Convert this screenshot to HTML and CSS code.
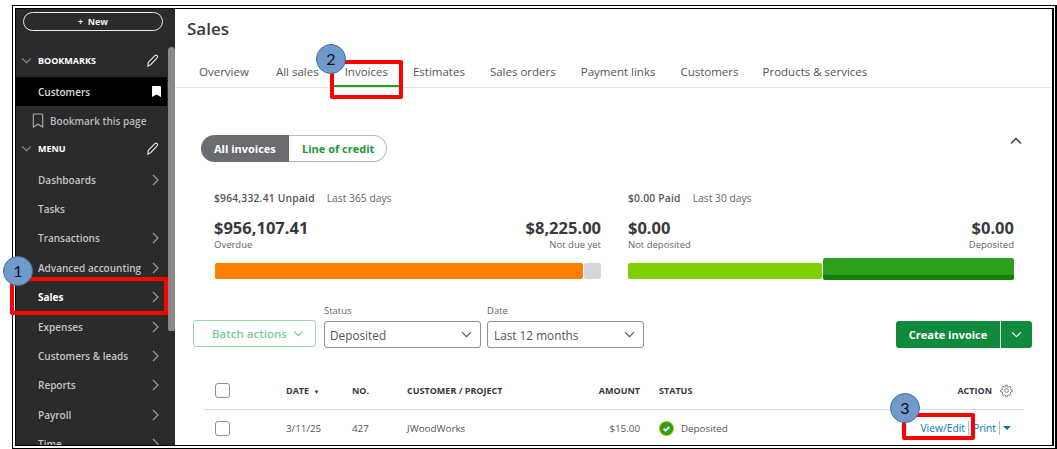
FILE: index.html
```html
<!DOCTYPE html>
<html lang="en">
<head>
<meta charset="utf-8">
<title>Sales</title>
<link rel="stylesheet" href="styles.css">
</head>
<body>
<div class="frame">
  <aside class="sidebar">
    <div class="new-wrap"><button class="new-btn">+&nbsp;&nbsp;New</button></div>
    <div class="side-head"><svg class="caret" viewBox="0 0 12 8"><path d="M1 1.500l5 5 5-5"/></svg><span>BOOKMARKS</span><svg class="pencil" viewBox="0 0 14 14"><path d="M2.500 9L9.500 1.700c.7-.7 1.700-.7 2.400 0s.7 1.700 0 2.400L5 11.500 2 13z"/></svg></div>
    <div class="side-active"><span>Customers</span><svg class="mark" viewBox="0 0 9 11"><path d="M0 1a1 1 0 0 1 1-1h7a1 1 0 0 1 1 1v10L4.500 8.500 0 11z"/></svg></div>
    <div class="side-bookmark"><svg class="mark-o" viewBox="0 0 12 16"><path d="M1 2a1 1 0 0 1 1-1h8a1 1 0 0 1 1 1v13L6 12l-5 3z"/></svg><span>Bookmark this page</span></div>
    <div class="side-head menu"><svg class="caret" viewBox="0 0 12 8"><path d="M1 1.500l5 5 5-5"/></svg><span>MENU</span><svg class="pencil" viewBox="0 0 14 14"><path d="M2.500 9L9.500 1.700c.7-.7 1.700-.7 2.400 0s.7 1.700 0 2.400L5 11.500 2 13z"/></svg></div>
    <nav class="side-nav">
      <div class="nav-item"><span>Dashboards</span><svg class="chev" viewBox="0 0 7 12"><path d="M1 1l5 5-5 5"/></svg></div>
      <div class="nav-item"><span>Tasks</span></div>
      <div class="nav-item"><span>Transactions</span><svg class="chev" viewBox="0 0 7 12"><path d="M1 1l5 5-5 5"/></svg></div>
      <div class="nav-item"><span>Advanced accounting</span><svg class="chev" viewBox="0 0 7 12"><path d="M1 1l5 5-5 5"/></svg></div>
      <div class="nav-item current"><span>Sales</span><svg class="chev" viewBox="0 0 7 12"><path d="M1 1l5 5-5 5"/></svg></div>
      <div class="nav-item"><span>Expenses</span><svg class="chev" viewBox="0 0 7 12"><path d="M1 1l5 5-5 5"/></svg></div>
      <div class="nav-item"><span>Customers &amp; leads</span><svg class="chev" viewBox="0 0 7 12"><path d="M1 1l5 5-5 5"/></svg></div>
      <div class="nav-item"><span>Reports</span><svg class="chev" viewBox="0 0 7 12"><path d="M1 1l5 5-5 5"/></svg></div>
      <div class="nav-item"><span>Payroll</span><svg class="chev" viewBox="0 0 7 12"><path d="M1 1l5 5-5 5"/></svg></div>
      <div class="nav-item"><span>Time</span><svg class="chev" viewBox="0 0 7 12"><path d="M1 1l5 5-5 5"/></svg></div>
    </nav>
    <div class="scrollbar"></div>
  </aside>
  <main class="main">
    <h1 class="title">Sales</h1>
    <div class="tabs">
      <span class="tab">Overview</span><span class="tab">All sales</span><span class="tab active">Invoices</span><span class="tab">Estimates</span><span class="tab">Sales orders</span><span class="tab">Payment links</span><span class="tab">Customers</span><span class="tab">Products &amp; services</span>
    </div>
    <div class="seg-row">
      <div class="seg"><span class="seg-on">All invoices</span><span class="seg-off">Line of credit</span></div>
      <svg class="collapse" viewBox="0 0 12 8"><path d="M1 6.500l5-5 5 5"/></svg>
    </div>
    <div class="summary">
      <section class="panel">
        <div class="panel-top"><b>$964,332.41 Unpaid</b><span>Last 365 days</span></div>
        <div class="figures"><div><div class="fig">$956,107.41</div><div class="cap">Overdue</div></div><div class="right"><div class="fig">$8,225.00</div><div class="cap">Not due yet</div></div></div>
        <div class="bar"><i class="b-orange"></i><i class="b-grey"></i></div>
      </section>
      <section class="panel">
        <div class="panel-top"><b>$0.00 Paid</b><span>Last 30 days</span></div>
        <div class="figures"><div><div class="fig">$0.00</div><div class="cap">Not deposited</div></div><div class="right"><div class="fig">$0.00</div><div class="cap">Deposited</div></div></div>
        <div class="bar"><i class="b-lime"></i><i class="b-green"></i></div>
      </section>
    </div>
    <div class="filters">
      <button class="batch">Batch actions<svg class="dd" viewBox="0 0 12 8"><path d="M1 1.500l5 5 5-5"/></svg></button>
      <div class="field status"><label>Status</label><div class="select"><span>Deposited</span><svg class="dd" viewBox="0 0 12 8"><path d="M1 1.500l5 5 5-5"/></svg></div></div>
      <div class="field date"><label>Date</label><div class="select"><span>Last 12 months</span><svg class="dd" viewBox="0 0 12 8"><path d="M1 1.500l5 5 5-5"/></svg></div></div>
      <div class="create"><span class="create-main">Create invoice</span><span class="create-dd"><svg class="dd" viewBox="0 0 12 8"><path d="M1 1.500l5 5 5-5"/></svg></span></div>
    </div>
    <div class="table">
      <div class="tr thead">
        <span class="c-check"><i class="box"></i></span><span class="c-date">DATE <small>▼</small></span><span class="c-no">NO.</span><span class="c-cust">CUSTOMER / PROJECT</span><span class="c-amt">AMOUNT</span><span class="c-status">STATUS</span>
        <span class="c-action">ACTION<svg class="gear" viewBox="0 0 24 24"><path d="M10.500 2h3l.5 2.800 2.200.9 2.300-1.600 2.100 2.100-1.600 2.300.9 2.200 2.800.5v3l-2.800.5-.9 2.200 1.600 2.300-2.100 2.100-2.300-1.600-2.200.9-.5 2.800h-3l-.5-2.800-2.200-.9-2.300 1.600-2.100-2.100 1.600-2.300-.9-2.200-2.800-.5v-3l2.800-.5.9-2.200-1.600-2.300 2.100-2.100 2.300 1.600 2.200-.9z"/><circle cx="12" cy="12" r="3.500"/></svg></span>
      </div>
      <div class="tr tbody">
        <span class="c-check"><i class="box"></i></span><span class="c-date">3/11/25</span><span class="c-no">427</span><span class="c-cust">JWoodWorks</span><span class="c-amt">$15.00</span>
        <span class="c-status"><svg class="ok" viewBox="0 0 16 16"><circle cx="8" cy="8" r="7.500"/><path d="M4.800 8.200l2.200 2.200 4-4"/></svg>Deposited</span>
        <span class="c-action links"><a class="view">View/Edit</a><a class="print">Print</a><i class="tri"></i></span>
      </div>
    </div>
  </main>
</div>
<div class="callout sales-box"></div>
<div class="callout inv-box"></div>
<div class="callout view-box"></div>
<div class="num n1">1</div>
<div class="num n2">2</div>
<div class="num n3">3</div>
</body>
</html>
```
FILE: styles.css
```css
* { box-sizing: border-box; }
html, body { margin: 0; padding: 0; background: #fff; }
body { position: relative; width: 1057px; height: 449px; overflow: hidden; font-family: "Open Sans", "Liberation Sans", sans-serif; }
svg { fill: none; stroke: currentColor; display: block; }
.frame { position: absolute; left: 12px; top: 5px; width: 1045px; height: 444px; border-style: double; border-color: #000; border-width: 4px 5px 4px 4px; display: flex; overflow: hidden; background: #fff; }

.sidebar { position: relative; width: 159px; flex: none; background: #2b2b2b; color: #c9c9c9; font-size: 10px; overflow: hidden; font-weight: 600; }
.new-wrap { padding: 3px 0 0 7px; height: 42px; }
.new-btn { display: block; width: 140px; height: 19px; border: 1px solid #e8e8e8; border-radius: 10px; background: transparent; color: #eee; font: 700 9px "Open Sans", sans-serif; }
.side-head { display: flex; align-items: center; height: 18px; padding: 0 16px 0 5px; color: #fff; font-size: 9px; font-weight: 700; }
.side-head span { margin-left: 6px; flex: 1; }
.caret { width: 11px; height: 7px; color: #8d8d8d; stroke-width: 1.200; }
.pencil { width: 13px; height: 13px; color: #e4e4e4; stroke-width: 1.200; }
.side-active { display: flex; align-items: center; justify-content: space-between; height: 29px; margin: 8px 8px 0 0; padding: 0 6px 0 22px; background: #000; color: #ddd; }
.mark { width: 9px; height: 11px; fill: #fff; stroke: none; }
.side-bookmark { display: flex; align-items: center; height: 29px; padding-left: 16px; color: #bbb; }
.mark-o { width: 12px; height: 15px; margin-right: 6px; color: #aaa; stroke-width: 1.200; }
.menu { margin-top: 4px; }
.side-nav { margin-top: 8px; }
.nav-item { display: flex; align-items: center; justify-content: space-between; height: 29.400px; padding: 0 16px 0 22px; color: #c4c4c4; }
.nav-item.current { color: #fff; font-weight: 700; }
.chev { width: 7px; height: 12px; color: #9a9a9a; stroke-width: 1.200; }
.scrollbar { position: absolute; right: 0; top: 38px; width: 7px; height: 284px; background: #8a8a8a; border-radius: 4px 4px 3px 3px; }

.main { flex: 1; min-width: 0; color: #393a3d; }
.title { margin: 0; padding: 8px 0 0 12px; height: 41px; font: 600 17px/24px "Open Sans", sans-serif; color: #393a3d; }
.tabs { display: flex; height: 38px; padding-left: 24px; border-bottom: 1px solid #e3e3e3; font-size: 11.500px; color: #555; gap: 25px; }
.tab { padding-top: 14px; line-height: 16px; }
.tab:first-child { margin-right: 2px; }
.tab.active { position: relative; margin-left: 1px; }
.tab.active::after { content: ""; position: absolute; left: -11px; right: -12px; top: 35px; height: 2px; background: #2ca01c; }
.tab:last-child { margin-left: -1px; }
.seg-row { display: flex; justify-content: space-between; align-items: flex-start; height: 27px; margin-top: 47px; padding: 0 30px 0 26px; }
.seg { display: flex; height: 27px; font-size: 11px; font-weight: 700; white-space: nowrap; }
.seg-on { display: flex; align-items: center; padding: 0 13px; width: 88px; background: #6b6c72; color: #fff; border-radius: 14px 0 0 14px; }
.seg-off { display: flex; align-items: center; padding: 0 0 0 13px; width: 98px; color: #1e9638; border: 1px solid #bbb; border-left: 0; border-radius: 0 14px 14px 0; }
.collapse { width: 12px; height: 8px; margin-top: 2px; color: #393a3d; stroke-width: 1.400; }
.summary { display: flex; gap: 27px; padding: 0 0 0 39px; margin-top: 29px; }
.panel { width: 387px; }
.panel + .panel { width: 386px; }
.panel-top { display: flex; gap: 12px; font-size: 10.300px; line-height: 14px; color: #666; }
.panel-top b { font-weight: 600; color: #555; letter-spacing: .2px; }
.figures { display: flex; justify-content: space-between; margin-top: 13px; }
.fig { font-size: 16.500px; line-height: 20px; font-weight: 700; color: #393a3d; }
.cap { font-size: 9.500px; line-height: 13px; color: #666; }
.right { text-align: right; }
.bar { display: flex; align-items: flex-end; height: 22px; margin-top: 7px; }
.bar i { display: block; height: 16px; margin-bottom: 1px; border-radius: 2px; }
.b-orange { width: 368px; margin-left: 1px; background: #ff8000; }
.b-grey { flex: 1; margin-left: 1px; background: #d4d7dc; }
.b-lime { width: 194px; background: #7fd000; }
.bar .b-green { flex: 1; margin: 0 0 0 1px; height: 22px; background: #2ca01c; border-bottom: 5px solid #108000; }

.filters { display: flex; align-items: flex-end; height: 48px; margin-top: 20px; padding-left: 18px; }
.batch { display: flex; align-items: center; justify-content: space-between; width: 123px; height: 27px; margin-bottom: 1px; padding: 0 11px 0 18px; border: 1px solid #98d9ab; border-radius: 3px; background: #fff; color: #7dcb94; font: 600 11.500px "Open Sans", sans-serif; }
.dd { width: 11px; height: 7px; stroke-width: 1.300; }
.field { margin-left: 8px; }
.field label { display: block; font-size: 9.500px; line-height: 18px; margin-bottom: 1px; color: #666; }
.select { display: flex; align-items: center; justify-content: space-between; height: 27px; padding: 0 8px 0 5px; border: 1px solid #8d9096; border-radius: 3px; font-size: 11.800px; color: #555; }
.status { width: 157px; }
.date { width: 157px; margin-left: 6px; }
.date .select { padding-left: 6px; }
.create { display: flex; margin-left: auto; margin-right: 20px; height: 27px; color: #fff; font-size: 11px; font-weight: 700; }
.create-main { display: flex; align-items: center; justify-content: center; width: 104px; background: #108a3c; border-radius: 3px 0 0 3px; }
.create-dd { display: flex; align-items: center; justify-content: center; width: 31px; margin-left: 1px; background: #108a3c; border-radius: 0 3px 3px 0; }

.table { margin: 0 28px 0 29px; font-size: 9.800px; color: #555; }
.tr { display: flex; align-items: center; }
.thead { height: 42px; margin-top: 20px; padding-top: 3px; border-bottom: 1px solid #dcdcdc; font-size: 9px; font-weight: 700; color: #393a3d; }
.tbody { height: 36px; }
.c-check { width: 82px; padding-left: 11px; }
.box { display: block; width: 15px; height: 15px; border: 1px solid #8d9096; border-radius: 3px; background: #fff; }
.c-date { width: 66px; }
.c-date small { font-size: 6px; margin-left: 2px; }
.c-no { width: 55px; }
.c-cust { width: 125px; }
.c-amt { width: 108px; text-align: right; }
.c-status { display: flex; align-items: center; gap: 7px; width: 100px; margin-left: 19px; }
.c-action { flex: 1; display: flex; justify-content: flex-end; align-items: center; padding-right: 11px; }
.gear { width: 13px; height: 13px; margin-left: 8px; color: #6b6c72; stroke-width: 1.600; }
.ok { width: 15px; height: 15px; flex: none; }
.ok circle { fill: #2ca01c; stroke: #b5c400; stroke-width: 1; }
.ok path { stroke: #fff; stroke-width: 2; }
.links { color: #0077c5; font-size: 10.300px; padding-right: 13px; }
.view { padding-right: 3px; border-right: 1px solid #bbb; }
.print { margin-left: 4px; padding-right: 3px; border-right: 1px solid #bbb; }
.tri { width: 0; height: 0; margin-left: 3px; border: 4px solid transparent; border-top: 4px solid #0077c5; border-bottom: 0; }

.callout { position: absolute; border: 4px solid #f00; border-radius: 2px; }
.sales-box { left: 10px; top: 277px; width: 158px; height: 38px; }
.inv-box { left: 330px; top: 60px; width: 73px; height: 39px; }
.view-box { left: 902px; top: 413px; width: 73px; height: 27px; }
.num { position: absolute; width: 30px; height: 30px; border: 1px solid #41719c; border-radius: 50%; background: #7099cc; color: #111; font: 16px/28px Lato, sans-serif; text-align: center; }
.n1 { left: 3px; top: 256px; }
.n2 { left: 316px; top: 44px; }
.n3 { left: 890px; top: 393px; }
```
